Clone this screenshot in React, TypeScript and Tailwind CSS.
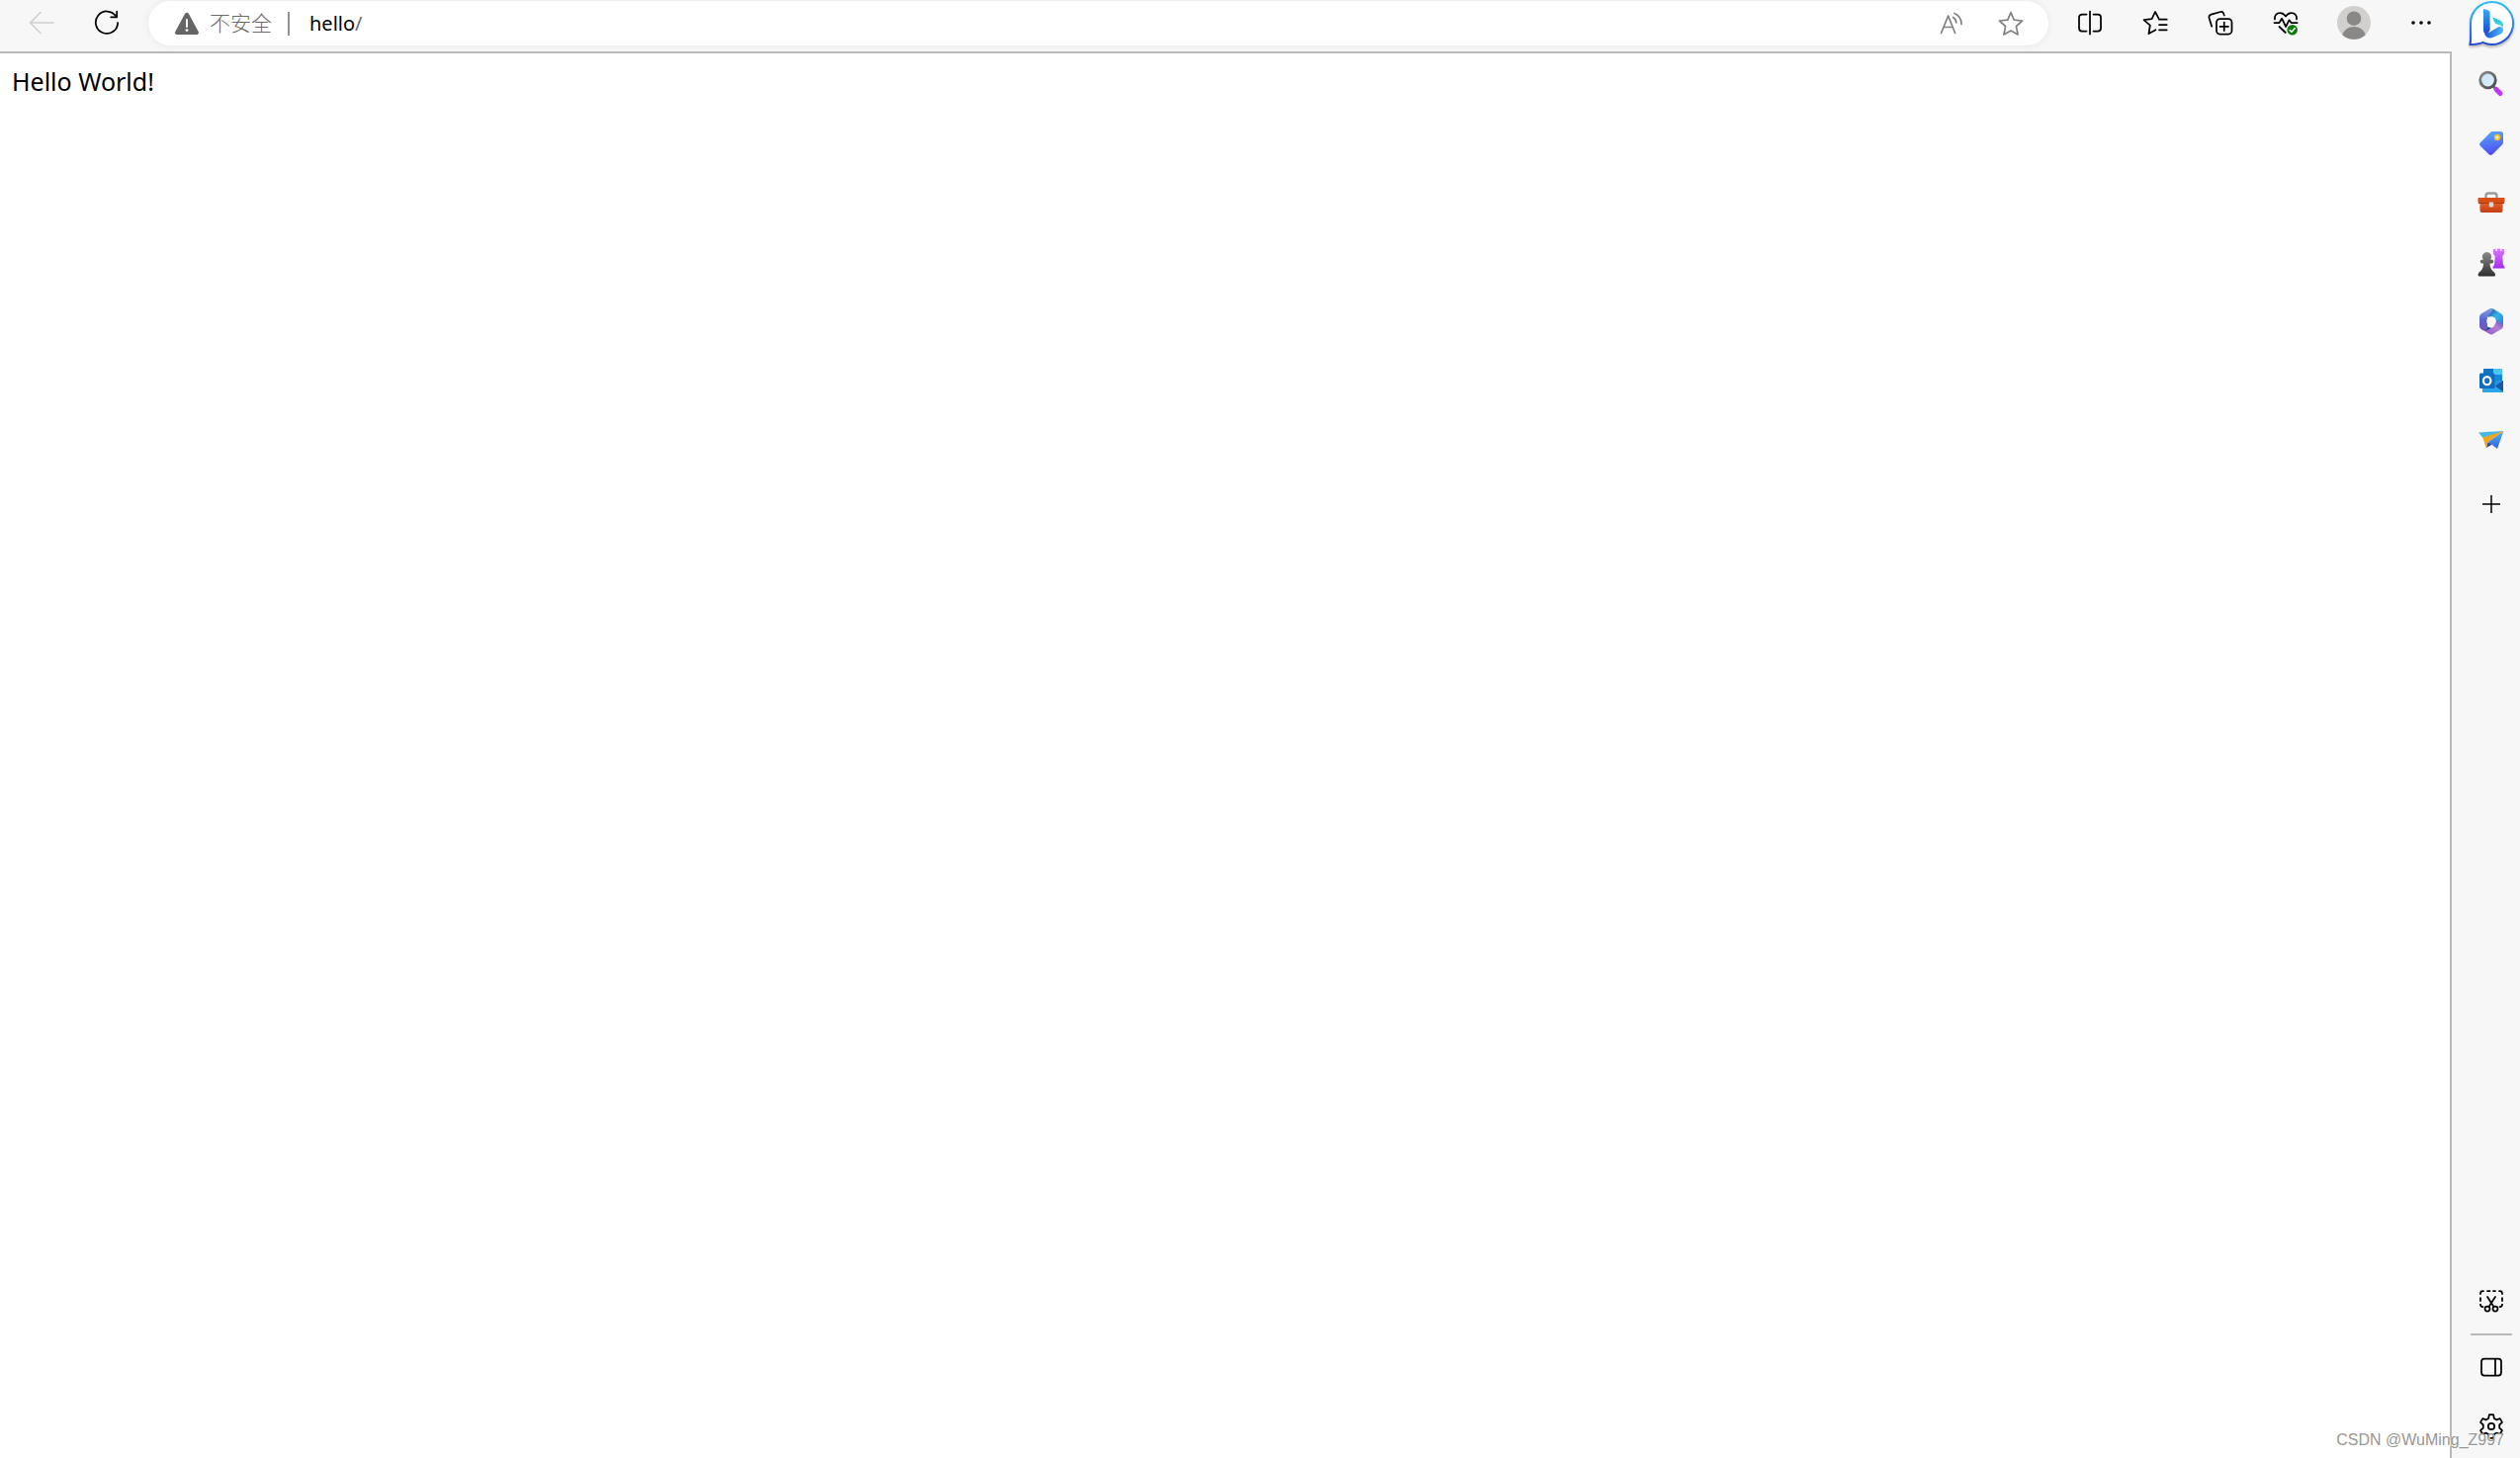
import type { ReactNode } from "react";

const line = {
  fill: "none",
  stroke: "currentColor",
  strokeWidth: 1.75,
  strokeLinecap: "round",
  strokeLinejoin: "round",
} as const;

export default function App() {
  return (
    <div className="relative flex min-h-screen bg-[#f7f7f7] font-['Noto_Sans','Noto_Sans_CJK_SC',sans-serif] text-black">
      <div className="flex min-w-0 flex-1 flex-col">
        <Toolbar />
        <main className="flex-1 border-t-2 border-r-2 border-[#b9b9b9] bg-white px-3 py-2">
          <p className="text-[25px] leading-10">Hello World!</p>
        </main>
      </div>
      <Sidebar />
      <span className="pointer-events-none absolute right-4 bottom-2 font-['Liberation_Sans',sans-serif] text-base leading-5 text-[#979797] [text-shadow:1px_1px_0_#ffffff]">
        CSDN @WuMing_Z997
      </span>
    </div>
  );
}

function Toolbar() {
  return (
    <header className="flex h-[52px] items-start pl-2">
      <IconButton label="Back" className="h-[46px] w-[67px] text-[#cfcfcf]">
        <svg width="26" height="26" viewBox="0 0 26 26" {...line} strokeWidth={1.6}>
          <path d="M25 13H2M12 2.5 1.5 13 12 23.5" />
        </svg>
      </IconButton>
      <IconButton label="Refresh" className="h-[46px] w-[66px]">
        <svg width="26" height="26" viewBox="0 0 26 26" {...line}>
          <path d="M22.4 6.6A11.2 11.2 0 1 0 24.2 13" />
          <path d="M23.2 1.5v5.8h-6" />
        </svg>
      </IconButton>

      <div className="mt-px ml-[9px] flex h-[45px] min-w-0 flex-1 items-center rounded-full bg-white pr-2 pl-[26px] shadow-[0_0_8px_rgba(0,0,0,0.07)]">
        <button type="button" className="flex h-full items-center gap-2.5 text-[21px] font-light text-[#6b6b6b]">
          <svg width="26" height="24" viewBox="0 0 26 24">
            <path
              d="M10.9 2.2a2.3 2.3 0 0 1 4.2 0l9.6 17.7a2 2 0 0 1-1.8 3.1H3.1a2 2 0 0 1-1.8-3.1z"
              fill="#666"
            />
            <path d="M13 8v7" stroke="#fff" strokeWidth="2" strokeLinecap="round" />
            <circle cx="13" cy="18.6" r="1.4" fill="#fff" />
          </svg>
          不安全
        </button>
        <span className="ml-4 h-6 w-0.5 bg-[#929292]" />
        <a href="#" className="ml-5 flex-1 text-xl leading-7">
          hello<span className="text-[#6b6b6b]">/</span>
        </a>
        <IconButton label="Read aloud" className="h-[45px] w-[60px] text-[#808080]">
          <svg width="26" height="26" viewBox="0 0 26 26" {...line} strokeWidth={1.7}>
            <path d="M2.5 22.5 9.6 5l7 17.5M5 16.5h9.2" />
            <path d="M14.6 6.5c1.9 1.2 3 3.1 3.2 5.3M16 2.5c4.4 1.9 7 5.8 7 11" />
          </svg>
        </IconButton>
        <IconButton label="Add to favorites" className="h-[45px] w-[60px] text-[#808080]">
          <svg width="26" height="26" viewBox="0 0 26 26" {...line} strokeWidth={1.7}>
            <path d="M13 1.7 16.2 9.2 24.6 10 18.4 15.6 20.1 24 13 20.1 5.9 24 7.6 15.6 1.4 10 9.8 9.2z" />
          </svg>
        </IconButton>
      </div>

      <div className="ml-2 flex items-center">
        <IconButton label="Split screen" className="h-[46px] w-[67px]">
          <svg width="26" height="26" viewBox="0 0 26 26" {...line}>
            <path d="M9.5 4.5H5a3 3 0 0 0-3 3v11a3 3 0 0 0 3 3h4.500M16.5 4.5H21a3 3 0 0 1 3 3v11a3 3 0 0 1-3 3h-4.500M13 1.5v23" />
          </svg>
        </IconButton>
        <IconButton label="Favorites" className="h-[46px] w-[66px]">
          <svg width="26" height="26" viewBox="0 0 26 26" {...line}>
            <path d="M13.5 20.2 6.5 24 7.8 15.6 1.5 10.2 9.6 9.2 13 2 16.5 8.6M17 9.7h7.700M17 15h7.700M17 20.3h7.700" />
          </svg>
        </IconButton>
        <IconButton label="Collections" className="h-[46px] w-[66px]">
          <svg width="26" height="26" viewBox="0 0 26 26" {...line}>
            <path d="M16.8 5.5 16.2 3.7A2.6 2.6 0 0 0 13 2L3.6 4.6A3 3 0 0 0 1.6 8.2l2.6 8.500" />
            <rect x="9" y="9" width="15.5" height="15.5" rx="3.5" />
            <path d="M16.75 12.5v8.500M12.5 16.75h8.500" />
          </svg>
        </IconButton>
        <IconButton label="Browser essentials" className="h-[46px] w-[66px]">
          <svg width="26" height="26" viewBox="0 0 26 26" {...line}>
            <path d="M2 9.5C1.4 5.5 4 3 7.2 3 9.9 3 11.7 4.5 13 6.6 14.3 4.5 16.1 3 18.8 3c3.2 0 5.8 2.5 5.2 6.500" />
            <path d="M1.5 13h5l2.6-4.3 4 8.3 3.4-6.7 2.2 2.7h6M6.5 17l6.3 6" />
            <circle cx="19.7" cy="20.3" r="5.3" fill="#107c10" stroke="none" />
            <path d="m17.2 20.5 1.8 1.8 3.3-3.700" stroke="#fff" strokeWidth="1.5" />
          </svg>
        </IconButton>
        <IconButton label="Profile" className="h-[46px] w-[72px]">
          <svg width="34" height="34" viewBox="0 0 34 34">
            <circle cx="17" cy="17" r="17" fill="#d2d0ce" />
            <circle cx="17" cy="12.7" r="7.3" fill="#8a8886" />
            <path d="M5.3 29.2a12.5 12.5 0 0 1 23.4 0A17 17 0 0 1 5.3 29.2z" fill="#8a8886" />
          </svg>
        </IconButton>
        <IconButton label="Settings and more" className="h-[46px] w-[63px]">
          <svg width="22" height="22" viewBox="0 0 22 22" fill="currentColor">
            <circle cx="3" cy="11" r="1.8" />
            <circle cx="11" cy="11" r="1.8" />
            <circle cx="19" cy="11" r="1.8" />
          </svg>
        </IconButton>
      </div>
    </header>
  );
}

function Sidebar() {
  return (
    <aside className="flex w-[69px] flex-col items-center pb-0.5 pl-2.5">
      <button type="button" aria-label="Bing chat" className="flex h-[55px] w-full shrink-0 items-start justify-center">
        <svg width="48" height="50" viewBox="0 0 48 50" className="drop-shadow-[0_2px_1px_rgba(0,0,0,0.25)]">
          <defs>
            <linearGradient id="bing-ring" x1="0" y1="0" x2="0" y2="1">
              <stop offset="0" stopColor="#2fc0f0" />
              <stop offset="0.5" stopColor="#2b90e8" />
              <stop offset="1" stopColor="#2548cf" />
            </linearGradient>
            <linearGradient id="bing-stem" x1="0" y1="0" x2="0" y2="1">
              <stop offset="0" stopColor="#31aef5" />
              <stop offset="1" stopColor="#1d47d2" />
            </linearGradient>
            <linearGradient id="bing-tail" x1="0" y1="0" x2="1" y2="0">
              <stop offset="0" stopColor="#1c50d8" />
              <stop offset="1" stopColor="#49bdf5" />
            </linearGradient>
            <linearGradient id="bing-arm" x1="0" y1="0" x2="1" y2="1">
              <stop offset="0" stopColor="#2cb5ee" />
              <stop offset="1" stopColor="#3ce6c4" />
            </linearGradient>
          </defs>
          <path
            d="M24.5 2a21.5 21.5 0 1 1-9.2 40.9C11.5 44.5 7 45 2.5 45 3.5 41 3 37 3 23.5A21.5 21.5 0 0 1 24.5 2z"
            fill="#fff"
            stroke="url(#bing-ring)"
            strokeWidth="2"
          />
          <path d="m16.5 9 4.5 1.6a2.5 2.5 0 0 1 1.6 2.3v17.5l-2.4 4.3c-2.3 0-4.2-1.6-4.2-4V9.4z" fill="url(#bing-stem)" />
          <path d="m25 17.3 7.6 3.2c3 1.3 4.4 4.5 3 7.5-1-2-3-2.8-5-3.3l-2.8-1.2z" fill="url(#bing-arm)" />
          <path d="M17 33.7c2 .4 3.5-.1 5-1l8.2-4.9c2.9-1.7 5.8-.3 5.9 2.2.1 2-1 3.3-2.7 4.4l-7.6 3.4c-3.8 1.7-7.8 0-8.8-4.1z" fill="url(#bing-tail)" />
        </svg>
      </button>
      <IconButton label="Search" className="h-[60px] w-full">
        <svg width="28" height="28" viewBox="0 0 28 28">
          <defs>
            <linearGradient id="lens" x1="0" y1="0" x2="1" y2="1">
              <stop offset="0" stopColor="#bfe2f8" />
              <stop offset="1" stopColor="#e2f1fb" />
            </linearGradient>
            <linearGradient id="rim" x1="0" y1="0" x2="1" y2="1">
              <stop offset="0" stopColor="#8b8b8b" />
              <stop offset="1" stopColor="#494949" />
            </linearGradient>
          </defs>
          <path d="m15.5 16 4 4" stroke="#666" strokeWidth="3" />
          <path d="m19 19.5 4 4" stroke="#c238f5" strokeWidth="5" strokeLinecap="round" />
          <circle cx="10.5" cy="10" r="7.8" fill="url(#lens)" stroke="url(#rim)" strokeWidth="2.8" />
        </svg>
      </IconButton>
      <IconButton label="Shopping" className="h-[60px] w-full">
        <svg width="26" height="26" viewBox="0 0 26 26">
          <defs>
            <linearGradient id="tag" x1="0.4" y1="0" x2="0.6" y2="1">
              <stop offset="0" stopColor="#56a8fa" />
              <stop offset="1" stopColor="#5147f4" />
            </linearGradient>
          </defs>
          <path d="M14 1h8.5A2.5 2.5 0 0 1 25 3.5V12a3 3 0 0 1-.9 2.2l-9.7 9.7a2.8 2.8 0 0 1-4 0l-8.3-7.8a2.8 2.8 0 0 1 0-4L12 1.9A3 3 0 0 1 14 1z" fill="url(#tag)" />
          <circle cx="19" cy="7" r="2.3" fill="#e7edff" stroke="#f5c418" strokeWidth="1.8" />
        </svg>
      </IconButton>
      <IconButton label="Tools" className="h-[60px] w-full">
        <svg width="28" height="24" viewBox="0 0 28 24">
          <defs>
            <linearGradient id="box" x1="0" y1="0" x2="0" y2="1">
              <stop offset="0" stopColor="#e9642a" />
              <stop offset="1" stopColor="#c43f12" />
            </linearGradient>
          </defs>
          <path d="M8.5 8V5A2.5 2.5 0 0 1 11 2.500h6A2.500 2.500 0 0 1 19.500 5V8" fill="none" stroke="#9a9a9a" strokeWidth="2.4" />
          <path d="M2.5 11h23v9a2 2 0 0 1-2 2h-19a2 2 0 0 1-2-2z" fill="url(#box)" />
          <rect x="0.5" y="7" width="27" height="5.5" rx="1" fill="#d94e17" />
          <path d="M1 12.5h26" stroke="#a83812" />
          <rect x="11.8" y="11.5" width="4.4" height="5" rx="1" fill="#d3d7d8" />
        </svg>
      </IconButton>
      <IconButton label="Games" className="h-[60px] w-full">
        <svg width="28" height="30" viewBox="0 0 28 30">
          <defs>
            <linearGradient id="pawn" x1="0" y1="0" x2="0" y2="1">
              <stop offset="0" stopColor="#8a8a8a" />
              <stop offset="1" stopColor="#303030" />
            </linearGradient>
            <linearGradient id="rook" x1="0" y1="0" x2="0" y2="1">
              <stop offset="0" stopColor="#d57bfa" />
              <stop offset="1" stopColor="#a92cf2" />
            </linearGradient>
          </defs>
          <path d="M16 2h2.5v2H20V1.5h3V4h1.500V2H27v5l-1.8 2 .8 9 1.5 2v1.5h-12V20l1.500-2 .8-9L16 7z" fill="url(#rook)" />
          <path d="M9.5 5a4.8 4.8 0 0 1 3.7 7.8h1.3a1.8 1.8 0 0 1 0 3.6h-2c.2 3.5 1 5.6 2.7 7.6 2 1.3 2.8 2.4 2.8 4.200 0 .8-.6 1.3-1.4 1.3H2c-.8 0-1.4-.5-1.4-1.3 0-1.8.8-2.9 2.8-4.200 1.7-2 2.5-4.1 2.7-7.600h-1.600a1.800 1.800 0 0 1 0-3.600h1.300A4.800 4.800 0 0 1 9.500 5z" fill="url(#pawn)" />
        </svg>
      </IconButton>
      <IconButton label="Microsoft 365" className="h-[60px] w-full">
        <svg width="26" height="28" viewBox="0 0 26 28">
          <defs>
            <linearGradient id="m365-a" x1="0" y1="0" x2="0" y2="1">
              <stop offset="0" stopColor="#7fa0ea" />
              <stop offset="0.5" stopColor="#5a67d0" />
              <stop offset="1" stopColor="#7153be" />
            </linearGradient>
            <linearGradient id="m365-b" x1="0" y1="0" x2="1" y2="1">
              <stop offset="0" stopColor="#183f96" />
              <stop offset="0.5" stopColor="#36b4e9" />
              <stop offset="1" stopColor="#2779d5" />
            </linearGradient>
            <linearGradient id="m365-c" x1="0" y1="1" x2="1" y2="0">
              <stop offset="0" stopColor="#8f55bf" />
              <stop offset="0.6" stopColor="#b57fd6" />
              <stop offset="1" stopColor="#5c50b8" />
            </linearGradient>
          </defs>
          <path d="m15 1.500 8 4.700a4 4 0 0 1 2 3.500V19L17 14 9 9l3-8a4 4 0 0 1 3 .5z" fill="url(#m365-b)" />
          <path d="m3.500 22.500 7.500 4.300a4 4 0 0 0 4 0l8-4.700a4 4 0 0 0 2-3.500V17.500L18 13l-3 7-7 2z" fill="url(#m365-c)" />
          <path d="M11 1.500 3 6.200A4 4 0 0 0 1 9.700v9a4 4 0 0 0 2 3.500l1 .6c2.500 1 5-.5 5-3V11c0-4.500 5.500-5 5.500-9.700a4 4 0 0 0-3.500.2z" fill="url(#m365-a)" />
          <path d="M3.200 22.400c3 1.300 5.800-.2 5.800-3l4 1.600-5 2.500z" fill="#24459f" />
          <circle cx="13" cy="14" r="4.800" fill="#f7f7f7" />
        </svg>
      </IconButton>
      <IconButton label="Outlook" className="h-[60px] w-full">
        <svg width="26" height="26" viewBox="0 0 26 26">
          <rect x="5" y="1" width="19" height="16" rx="1.2" fill="#28a8ea" />
          <path d="M5 2.2A1.2 1.2 0 0 1 6.2 1H15v6H5z" fill="#1272c4" />
          <path d="M15 1h7.8A1.2 1.2 0 0 1 24 2.2V7h-9z" fill="#4ac7f5" />
          <path d="M15 7h9v7l-9 4z" fill="#1687da" />
          <path d="M4 13h21v10.8A1.2 1.2 0 0 1 23.8 25H5.2A1.2 1.2 0 0 1 4 23.8z" fill="#2197e4" />
          <path d="M17 18.5 25 13v11.5z" fill="#155aa3" />
          <path d="m12 16 13 8.5a1.2 1.2 0 0 1-1.2.5H5.2A1.2 1.2 0 0 1 4 23.8V18z" fill="#2ba5ea" />
          <rect x="1" y="5.5" width="15.5" height="15.5" rx="1.5" fill="#0f6cbd" />
          <ellipse cx="8.700" cy="13.200" rx="3.700" ry="4" fill="none" stroke="#fff" strokeWidth="2.2" />
        </svg>
      </IconButton>
      <IconButton label="Drop" className="h-[60px] w-full">
        <svg width="28" height="22" viewBox="0 0 28 22">
          <defs>
            <linearGradient id="plane" x1="0" y1="0" x2="0" y2="1">
              <stop offset="0" stopColor="#48b6f5" />
              <stop offset="1" stopColor="#315fe8" />
            </linearGradient>
          </defs>
          <path d="M1 3.5 26.5 2 6 9.5z" fill="#45b8ee" />
          <path d="m9 19 1.500-6 4.500 2.500z" fill="#254da8" />
          <path d="M26.5 2 20 20 11 13z" fill="url(#plane)" />
          <path d="M26.5 2 5.500 8.500 8.500 19 10.500 13.500z" fill="#efa51c" />
        </svg>
      </IconButton>
      <IconButton label="Customize" className="h-[70px] w-full">
        <svg width="20" height="20" viewBox="0 0 20 20" stroke="currentColor" strokeWidth="1.5">
          <path d="M10 1v18M1 10h18" />
        </svg>
      </IconButton>

      <IconButton label="Screenshot" className="mt-auto mb-[3px] h-[60px] w-full">
        <svg width="26" height="24" viewBox="0 0 26 24" {...line}>
          <path d="M2 5V4.5A2.5 2.5 0 0 1 4.5 2H5M9 2h2.500M15 2h2M21 2h.5A2.5 2.5 0 0 1 24 4.5V5M2 9v3M24 9v3M2 15.5A2.5 2.5 0 0 0 4.5 18M24 15.5a2.5 2.5 0 0 1-2.5 2.500" />
          <path d="m9 8 6.5 10M17 8l-6.5 10" />
          <circle cx="9" cy="20" r="2.5" />
          <circle cx="17" cy="20" r="2.5" />
        </svg>
      </IconButton>
      <hr className="mb-0.5 w-[42px] border-t-2 border-[#b9b9b9]" />
      <IconButton label="Hide sidebar" className="h-[60px] w-full">
        <svg width="24" height="20" viewBox="0 0 24 20" {...line}>
          <rect x="2" y="1.5" width="20" height="17" rx="3" />
          <path d="M16 2v16" />
        </svg>
      </IconButton>
      <IconButton label="Settings" className="h-[60px] w-full">
        <svg width="26" height="26" viewBox="0 0 26 26" {...line}>
          <path d="M10.9 1.2h4.200l.8 3.800 2.200 1.300 3.700-1.200 2.200 3.800-2.800 2.600v3l2.800 2.600-2.200 3.800-3.700-1.200-2.200 1.300-.8 3.800h-4.200L10.100 21l-2.200-1.300-3.700 1.200L2 17.100l2.800-2.600v-3L2 8.900l2.200-3.800 3.700 1.200L10.100 5z" />
          <circle cx="13" cy="13" r="3.2" />
        </svg>
      </IconButton>
    </aside>
  );
}

function IconButton({
  label,
  className,
  children,
}: {
  label: string;
  className: string;
  children: ReactNode;
}) {
  return (
    <button
      type="button"
      aria-label={label}
      className={`flex shrink-0 items-center justify-center ${className}`}
    >
      {children}
    </button>
  );
}
